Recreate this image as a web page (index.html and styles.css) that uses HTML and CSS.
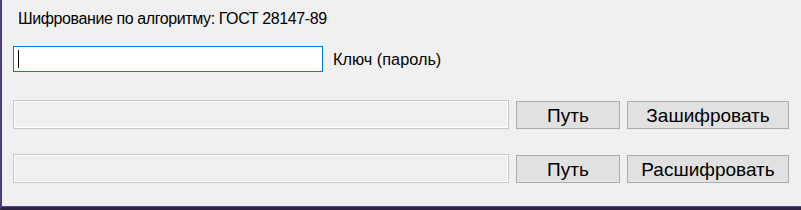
FILE: index.html
```html
<!DOCTYPE html>
<html lang="ru">
<head>
<meta charset="utf-8">
<link rel="stylesheet" href="styles.css">
</head>
<body>
<div class="window">
  <div class="title">Шифрование по алгоритму: ГОСТ 28147-89</div>
  <div class="key-row">
    <div class="key-input"><span class="caret"></span></div>
    <div class="key-label">Ключ (пароль)</div>
  </div>
  <div class="path-row first">
    <div class="path-field"></div>
    <div class="btn btn-path">Путь</div>
    <div class="btn btn-action">Зашифровать</div>
  </div>
  <div class="path-row second">
    <div class="path-field"></div>
    <div class="btn btn-path">Путь</div>
    <div class="btn btn-action">Расшифровать</div>
  </div>
</div>
</body>
</html>
```

FILE: styles.css
```css
html, body {
  margin: 0;
  padding: 0;
  background: #f0f0f0;
}
.window {
  width: 801px;
  height: 210px;
  box-sizing: border-box;
  background: #f0f0f0;
  border-left: 2px solid #4f3d7c;
  border-bottom: 3px solid #2e2545;
  box-shadow: inset 0 -1px 0 #5b4596;
  padding-left: 11px;
  display: flex;
  flex-direction: column;
  font-family: "Liberation Sans", Arial, sans-serif;
  font-size: 16px;
  color: #000;
}
.title {
  padding-top: 9px;
  padding-left: 5px;
  line-height: 20px;
  height: 20px;
  font-size: 16px;
  letter-spacing: -0.4px;
}
.key-row {
  margin-top: 17px;
  display: flex;
  align-items: center;
  height: 26px;
}
.key-input {
  width: 310px;
  height: 26px;
  box-sizing: border-box;
  border: 1px solid #0078d7;
  background: #fff;
  display: flex;
  align-items: center;
  padding-left: 4px;
}
.caret {
  width: 1px;
  height: 18px;
  background: #000;
}
.key-label {
  margin-left: 10px;
  line-height: 20px;
  font-size: 16.3px;
}
.path-row {
  display: flex;
  align-items: flex-start;
  height: 29px;
}
.path-row.first { margin-top: 28px; }
.path-row.second { margin-top: 25px; }
.path-field {
  width: 496px;
  height: 29px;
  box-sizing: border-box;
  border: 1px solid #c8c8c8;
  box-shadow: inset 0 0 0 1px #fff;
  background: #f0f0f0;
}
.btn {
  margin-top: 1px;
  height: 28px;
  box-sizing: border-box;
  border: 1px solid #adadad;
  background: #e1e1e1;
  display: flex;
  align-items: center;
  justify-content: center;
  line-height: 20px;
  font-size: 19px;
  padding-top: 1px;
}
.btn-path {
  margin-left: 7px;
  width: 104px;
}
.btn-action {
  margin-left: 7px;
  width: 162px;
}
```
